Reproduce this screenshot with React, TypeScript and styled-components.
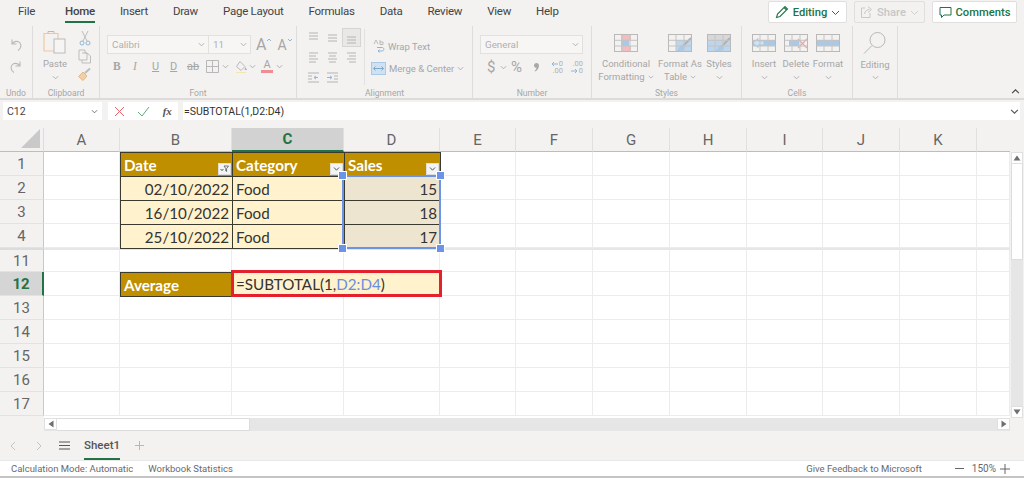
import React from "react";
import styled, { createGlobalStyle } from "styled-components";

const UI = `Roboto, "Open Sans", sans-serif`;
const SHEET = `Lato, "Liberation Sans", sans-serif`;
const FADED = "#a6a6a6";

const Global = createGlobalStyle`
  html, body { margin: 0; padding: 0; background: #f3f2f1; }
  body { font-family: ${UI}; overflow: hidden; }
  * { box-sizing: border-box; }
  svg { display: block; flex: none; }
`;

const Page = styled.div`
  width: 1024px;
  height: 478px;
  background: #f3f2f1;
  display: flex;
  flex-direction: column;
  overflow: hidden;
`;

/* top tabs */
const TabBar = styled.div`
  height: 26px;
  display: flex;
  align-items: flex-start;
  padding: 1px 7px 0 18px;
`;
const TabList = styled.div`
  display: flex;
  gap: 25px;
  flex: 1;
`;
const Tab = styled.div<{ $active?: boolean }>`
  height: 22px;
  padding-top: 2px;
  margin-left: ${(p) => (p.$active ? 5 : 0)}px;
  font-size: 11.5px;
  letter-spacing: -0.25px;
  line-height: 17px;
  color: #444;
  white-space: nowrap;
  font-weight: ${(p) => (p.$active ? 500 : 400)};
  border-bottom: 2px solid ${(p) => (p.$active ? "#217346" : "transparent")};
`;
const TopButtons = styled.div`
  display: flex;
  gap: 7px;
`;
const TopButton = styled.div<{ $w: number; $muted?: boolean }>`
  width: ${(p) => p.$w}px;
  height: 22px;
  display: flex;
  align-items: center;
  justify-content: center;
  gap: 4px;
  font-size: 11.2px;
  font-weight: 500;
  border-radius: 2px;
  border: 1px solid #e1dfdd;
  color: ${(p) => (p.$muted ? "#c6c6c6" : "#217346")};
  background: ${(p) => (p.$muted ? "#f3f2f1" : "#fff")};
`;

/* ribbon */
const Ribbon = styled.div`
  height: 74px;
  display: flex;
  position: relative;
  border-bottom: 2px solid #dcdbda;
`;
const Group = styled.div<{ $w: number; $last?: boolean }>`
  width: ${(p) => p.$w}px;
  height: 72px;
  display: flex;
  flex-direction: column;
  border-right: ${(p) => (p.$last ? "none" : "1px solid #dedddc")};
`;
const GroupBody = styled.div<{ $pad?: string }>`
  height: 62px;
  display: flex;
  align-items: flex-start;
  padding: ${(p) => p.$pad || "0"};
`;
const GroupLabel = styled.div`
  height: 10px;
  font-size: 8.6px;
  line-height: 10px;
  color: ${FADED};
  text-align: center;
`;
const Column = styled.div<{ $gap?: number; $pad?: string; $align?: string; $w?: string }>`
  display: flex;
  flex-direction: column;
  align-items: ${(p) => p.$align || "center"};
  gap: ${(p) => p.$gap || 0}px;
  padding: ${(p) => p.$pad || "0"};
  width: ${(p) => p.$w || "auto"};
`;
const Row = styled.div<{ $gap?: number; $pad?: string }>`
  display: flex;
  align-items: center;
  gap: ${(p) => p.$gap || 0}px;
  padding: ${(p) => p.$pad || "0"};
`;
const Slot = styled.div<{ $w?: number; $ml?: number; $mt?: number }>`
  display: flex;
  ${(p) => (p.$w ? `width: ${p.$w}px;` : "")}
  margin-left: ${(p) => p.$ml || 0}px;
  margin-top: ${(p) => p.$mt || 0}px;
`;
const Faded = styled.div<{
  $size?: number;
  $w?: number;
  $ml?: number;
  $mt?: number;
  $bold?: boolean;
  $deco?: string;
  $serif?: boolean;
  $italic?: boolean;
}>`
  font-size: ${(p) => p.$size || 9.5}px;
  line-height: 13px;
  color: ${FADED};
  white-space: nowrap;
  display: flex;
  align-items: center;
  gap: 3px;
  ${(p) => (p.$w ? `width: ${p.$w}px;` : "")}
  margin-left: ${(p) => p.$ml || 0}px;
  margin-top: ${(p) => p.$mt || 0}px;
  font-weight: ${(p) => (p.$bold ? 700 : 400)};
  font-style: ${(p) => (p.$italic ? "italic" : "normal")};
  text-decoration: ${(p) => p.$deco || "none"};
  ${(p) => (p.$serif ? `font-family: "Liberation Serif", serif;` : "")}
`;
const GrowFont = styled.div<{ $size: number; $ml: number }>`
  display: flex;
  align-items: flex-start;
  font-size: ${(p) => p.$size}px;
  line-height: 16px;
  color: ${FADED};
  margin-left: ${(p) => p.$ml}px;
`;
const ColorFont = styled.div`
  font-size: 11px;
  line-height: 10px;
  color: ${FADED};
`;
const RibbonSelect = styled.div<{ $w: number; $overlap?: boolean }>`
  width: ${(p) => p.$w}px;
  height: 19px;
  margin-left: ${(p) => (p.$overlap ? -1 : 0)}px;
  background: #f7f6f5;
  border: 1px solid #e2e1e0;
  display: flex;
  align-items: center;
  justify-content: space-between;
  padding: 0 3px 0 4px;
  font-size: 9.8px;
  color: #b0b0b0;
`;
const StyleButton = styled.div<{ $w?: number }>`
  width: ${(p) => p.$w || 32}px;
  display: flex;
  flex-direction: column;
  align-items: center;
`;
const AlignCell = styled.div<{ $on?: boolean }>`
  width: 19px;
  height: 19px;
  display: flex;
  align-items: center;
  justify-content: center;
  border: 1px solid ${(p) => (p.$on ? "#d6d5d4" : "transparent")};
  background: ${(p) => (p.$on ? "#e9e8e7" : "transparent")};
`;
const AlignGrid = styled.div`
  display: grid;
  grid-template-columns: 19px 19px 19px;
  grid-template-rows: 19px 21px 19px;
  align-items: center;
  justify-items: center;
  margin: 2px 0 0 7px;
`;
const InnerRule = styled.div`
  width: 1px;
  height: 56px;
  background: #e2e1e0;
  margin: 3px 8px 0 3px;
`;
const Collapse = styled.div`
  position: absolute;
  right: 4px;
  bottom: 2px;
`;
const Decimal = styled.div`
  width: 14px;
  font-size: 7.5px;
  line-height: 7px;
  color: #b0b0b0;
  display: flex;
  flex-direction: column;
  align-items: flex-end;
`;
const DecimalLine = styled.div`
  display: flex;
  align-items: center;
  gap: 1px;
`;

/* formula bar */
const FormulaBar = styled.div`
  height: 28px;
  display: flex;
  padding: 2px 4px 8px 3px;
`;
const NameBox = styled.div`
  width: 99px;
  background: #fff;
  display: flex;
  align-items: center;
  justify-content: space-between;
  padding: 0 4px;
  font-size: 10.5px;
  color: #444;
  margin-right: 6px;
`;
const FxBox = styled.div`
  width: 70px;
  background: #fff;
  display: flex;
  align-items: center;
  justify-content: space-around;
  margin-right: 5px;
`;
const FxLabel = styled.span`
  font-family: "Liberation Serif", serif;
  font-style: italic;
  font-weight: 700;
  font-size: 11px;
  color: #555;
`;
const FormulaInput = styled.div`
  flex: 1;
  background: #fff;
  display: flex;
  align-items: center;
  justify-content: space-between;
  padding: 0 1px 0 1px;
  font-size: 10.5px;
  color: #333;
`;

/* sheet */
const SheetRow = styled.div`
  display: flex;
  height: 290px;
`;
const Grid = styled.div`
  width: 1010px;
  height: 290px;
  display: grid;
  grid-template-columns: 44px 76px 112px 112px 96px 76px 77px 77px 77px 76px 77px 77px 33px;
  grid-template-rows: repeat(12, 24px) 2px;
  position: relative;
  background: #fff;
`;
const Corner = styled.div`
  background: #f3f2f1;
  border-right: 1px solid #dcdcdc;
  border-bottom: 1px solid #bdbdbd;
  position: relative;
`;
const CornerMark = styled.div`
  position: absolute;
  right: 3px;
  bottom: 3px;
  width: 0;
  height: 0;
  border-style: solid;
  border-width: 0 0 19px 19px;
  border-color: transparent transparent #c9c9c9 transparent;
`;
const ColHead = styled.div<{ $on?: boolean; $open?: boolean }>`
  background: ${(p) => (p.$on ? "#d2d2d2" : "#f3f2f1")};
  color: ${(p) => (p.$on ? "#217346" : "#666")};
  font-weight: ${(p) => (p.$on ? 700 : 400)};
  font-size: 15px;
  display: flex;
  align-items: center;
  justify-content: center;
  border-right: ${(p) => (p.$open ? "none" : "1px solid #e0e0e0")};
  border-bottom: ${(p) => (p.$on ? "2px solid #217346" : "1px solid #bdbdbd")};
`;
const RowHead = styled.div<{ $on?: boolean; $thick?: boolean }>`
  background: ${(p) => (p.$on ? "#d5d5d5" : "#f3f2f1")};
  color: ${(p) => (p.$on ? "#217346" : "#666")};
  font-weight: ${(p) => (p.$on ? 700 : 400)};
  font-size: 15px;
  display: flex;
  align-items: center;
  justify-content: center;
  border-right: ${(p) => (p.$on ? "2px solid #217346" : "1px solid #c8c8c8")};
  border-bottom: 1px solid #e2e2e2;
  border-top: ${(p) => (p.$thick ? "2px solid #dcdcdc" : "none")};
`;
const RowFoot = styled.div`
  grid-column: 1;
  background: #f3f2f1;
`;
const Cell = styled.div<{ $thick?: boolean }>`
  border-right: 1px solid #ececec;
  border-bottom: 1px solid #ececec;
  border-top: ${(p) => (p.$thick ? "2px solid #e6e6e6" : "none")};
`;
const TableCell = styled.div<{
  $kind: "head" | "body" | "picked";
  $right?: boolean;
}>`
  position: relative;
  background: ${(p) =>
    p.$kind === "head" ? "#bf8f00" : p.$kind === "picked" ? "#ede5cf" : "#fff2cc"};
  color: ${(p) => (p.$kind === "head" ? "#fff" : "#333")};
  font-family: ${SHEET};
  font-size: 15.2px;
  font-weight: ${(p) => (p.$kind === "head" ? 700 : 400)};
  border: 1px solid #3a3a2e;
  margin: 0 -1px -1px 0;
  padding: 0 3px;
  display: flex;
  align-items: center;
  justify-content: ${(p) => (p.$right ? "flex-end" : "flex-start")};
  white-space: nowrap;
`;
const FilterButton = styled.div`
  position: absolute;
  right: 1px;
  bottom: 1px;
  width: 13px;
  height: 12px;
  background: #f4f4f4;
  border: 1px solid #ddd;
  display: flex;
  align-items: center;
  justify-content: center;
`;
const FormulaCell = styled.div`
  grid-column: 4 / span 2;
  margin: -2px -2px -1px -1px;
  border: 3px solid #e3202b;
  background: #fff2cc;
  position: relative;
  z-index: 3;
  display: flex;
  align-items: center;
  padding: 0 2px;
  font-family: ${SHEET};
  font-size: 15.2px;
  color: #333;
  white-space: nowrap;
`;
const RangeRef = styled.span`
  color: #6b8fe0;
`;
const RangeBox = styled.div`
  position: absolute;
  grid-column: 5 / 6;
  grid-row: 3 / 6;
  inset: -1px -1px -1px -2px;
  border: 2px solid #6d93e6;
  z-index: 2;
  pointer-events: none;
`;
const Handle = styled.div<{ $x: "left" | "right"; $y: "top" | "bottom" }>`
  position: absolute;
  ${(p) => p.$x}: -6px;
  ${(p) => p.$y}: -6px;
  width: 7px;
  height: 7px;
  background: #6d93e6;
  border: 1px solid #fff;
  box-sizing: content-box;
`;

/* vertical scrollbar */
const VScroll = styled.div`
  width: 12px;
  margin: 24px 0 0 1px;
  height: 266px;
  display: flex;
  flex-direction: column;
  background: #e6e6e6;
`;
const ScrollArrow = styled.div<{ $w?: number }>`
  width: ${(p) => p.$w || 12}px;
  height: 12px;
  flex: none;
  background: #fff;
  border: 1px solid #e0e0e0;
  display: flex;
  align-items: center;
  justify-content: center;
`;
const Thumb = styled.div`
  height: 96px;
  background: #fff;
  border: 1px solid #dcdcdc;
  border-top: none;
`;
const Spacer = styled.div`
  flex: 1;
`;

/* horizontal scrollbar */
const HScrollRow = styled.div`
  height: 13px;
  display: flex;
  padding-left: 44px;
`;
const HScroll = styled.div`
  width: 966px;
  height: 13px;
  background: #e6e6e6;
  display: flex;
`;
const HThumb = styled.div`
  width: 193px;
  background: #fff;
  border-top: 1px solid #dcdcdc;
  border-bottom: 1px solid #dcdcdc;
  border-right: 1px solid #dcdcdc;
`;

/* sheet tabs */
const SheetTabs = styled.div`
  height: 29px;
  display: flex;
  align-items: center;
  padding-left: 10px;
`;
const SheetTab = styled.div`
  width: 36px;
  height: 28px;
  margin: 0 15px 0 14px;
  font-size: 11.5px;
  font-weight: 500;
  color: #555;
  display: flex;
  align-items: center;
  justify-content: center;
  border-bottom: 2px solid #217346;
`;
const NavGap = styled.div<{ $w: number }>`
  width: ${(p) => p.$w}px;
`;

/* status bar */
const StatusBar = styled.div`
  height: 18px;
  background: #fff;
  border-top: 1px solid #e8e8e8;
  border-bottom: 2px solid #c4c4c4;
  display: flex;
  align-items: center;
  padding: 0 14px 0 11px;
  font-size: 9.5px;
  color: #6a6a6a;
  white-space: nowrap;
`;
const StatusItem = styled.div<{ $ml?: number }>`
  margin-left: ${(p) => p.$ml || 0}px;
`;
const Zoom = styled.div`
  margin-left: 33px;
  display: flex;
  align-items: center;
  gap: 4px;
  font-size: 10px;
`;
const ZoomValue = styled.span`
  margin-left: 4px;
`;

/* drawings */
const Chevron = ({ size = 7, color = "#a8a8a8", up }: { size?: number; color?: string; up?: boolean }) => (
  <svg width={size} height={size} viewBox="0 0 8 8" fill="none">
    <path d={up ? "M1 5.5 L4 2.5 L7 5.5" : "M1 2.5 L4 5.5 L7 2.5"} stroke={color} strokeWidth="1" />
  </svg>
);

const Lines = ({ rows }: { rows: number[][] }) => (
  <svg width="13" height="13" viewBox="0 0 13 13" stroke="#b4b4b4" strokeWidth="1">
    {rows.map((r, i) => (
      <line key={i} x1={r[0]} x2={r[1]} y1={r[2]} y2={r[2]} />
    ))}
  </svg>
);

const TableGlyph = ({ children }: { children?: React.ReactNode }) => (
  <svg width="24" height="18" viewBox="0 0 24 18" fill="none">
    {children}
    <rect x=".5" y=".5" width="23" height="17" stroke="#b9b9b9" />
    <path d="M.5 6.3H23.5M.5 12H23.5M8 .5V17.5M16 .5V17.5" stroke="#c4c4c4" />
  </svg>
);

const Brush = () => (
  <g>
    <path d="M23 4 L14 13" stroke="#b0b0b0" strokeWidth="2" />
    <path d="M15 11 C11 11 11 16 8 17 C12 18 17 17 16.5 13 Z" fill="#a9c9e6" />
  </g>
);

const DecimalArrow = ({ right }: { right?: boolean }) => (
  <svg width="7" height="6" viewBox="0 0 7 6" fill="none" stroke="#8fb6d8">
    <path d={right ? "M0 3H6M4 1 L6 3 L4 5" : "M7 3H1M3 1 L1 3 L3 5"} />
  </svg>
);

const alignRows: number[][][] = [
  [[2, 11, 2], [2, 11, 5], [2, 11, 8]],
  [[2, 11, 4], [2, 11, 7], [2, 11, 10]],
  [[2, 11, 6], [2, 11, 9], [2, 11, 12]],
  [[2, 11, 2], [2, 9, 5], [2, 11, 8], [2, 9, 11]],
  [[2, 11, 2], [3, 10, 5], [2, 11, 8], [3, 10, 11]],
  [[2, 11, 2], [4, 11, 5], [2, 11, 8], [4, 11, 11]],
];

const tabs = ["File", "Home", "Insert", "Draw", "Page Layout", "Formulas", "Data", "Review", "View", "Help"];
const columns = ["A", "B", "C", "D", "E", "F", "G", "H", "I", "J", "K", ""];
const tableRows = [
  { num: "2", date: "02/10/2022", sales: "15" },
  { num: "3", date: "16/10/2022", sales: "18" },
  { num: "4", date: "25/10/2022", sales: "17" },
];
const blankRows = ["13", "14", "15", "16", "17"];

const Blanks = ({ n, thick }: { n: number; thick?: boolean }) => (
  <>
    {Array.from({ length: n }).map((_, i) => (
      <Cell key={i} $thick={thick} />
    ))}
  </>
);

const Filter = ({ funnel }: { funnel?: boolean }) => (
  <FilterButton>
    <svg width="9" height="8" viewBox="0 0 9 8" fill="none">
      {funnel && <path d="M4 1H8.5L6.6 3.6V6.5L5.8 6V3.6Z" stroke="#555" strokeWidth=".8" />}
      <path d={funnel ? "M.6 4 L2 5.6 L3.4 4" : "M2 2.5 L4.5 5.2 L7 2.5"} stroke="#555" strokeWidth="1" />
    </svg>
  </FilterButton>
);

const Triangle = ({ dir }: { dir: "up" | "down" | "left" | "right" }) => {
  const d = {
    up: "M4 1.5 L7.5 6.5 H.5Z",
    down: "M.5 1.5 H7.5 L4 6.5Z",
    left: "M1.5 4 L6.5 .5 V7.5Z",
    right: "M6.5 4 L1.5 .5 V7.5Z",
  }[dir];
  return (
    <svg width="8" height="8" viewBox="0 0 8 8">
      <path d={d} fill="#6f6f6f" />
    </svg>
  );
};

export default function App() {
  return (
    <Page>
      <Global />
      <TabBar>
        <TabList>
          {tabs.map((t) => (
            <Tab key={t} $active={t === "Home"}>
              {t}
            </Tab>
          ))}
        </TabList>
        <TopButtons>
          <TopButton $w={79}>
            <svg width="14" height="14" viewBox="0 0 14 14" fill="none" stroke="#217346" strokeWidth="1.1">
              <path d="M1.5 12.5 L2.5 9 L10 1.5 L12.5 4 L5 11.5 Z M9 2.5 L11.5 5" />
            </svg>
            Editing
            <svg width="9" height="9" viewBox="0 0 9 9" fill="none" stroke="#217346">
              <path d="M1 3 L4.5 6.5 L8 3" />
            </svg>
          </TopButton>
          <TopButton $w={71} $muted>
            <svg width="13" height="14" viewBox="0 0 13 14" fill="none" stroke="#c8c8c8">
              <path d="M5 3H1.5V12.5H10V8M4.5 9C5 6 7 4.5 9.5 4.5M8 1.5 L11.5 4.5 L8 7.5" />
            </svg>
            Share
            <svg width="9" height="9" viewBox="0 0 9 9" fill="none" stroke="#d0d0d0">
              <path d="M1 3 L4.5 6.5 L8 3" />
            </svg>
          </TopButton>
          <TopButton $w={85}>
            <svg width="13" height="13" viewBox="0 0 13 13" fill="none" stroke="#217346">
              <path d="M1 1.5H12V9H5L2.5 11.5V9H1Z" />
            </svg>
            Comments
          </TopButton>
        </TopButtons>
      </TabBar>

      <Ribbon>
        <Group $w={33}>
          <GroupBody>
            <Column $gap={8} $pad="12px 0 0 0" $w="100%">
              <svg width="14" height="14" viewBox="0 0 14 14" fill="none" stroke="#b8b8b8" strokeWidth="1.1">
                <path d="M3 1.5V6H7.5M3.2 5.8C5 3 9 2.5 11 5C13 7.5 11.5 11 9 12.5" />
              </svg>
              <svg width="14" height="14" viewBox="0 0 14 14" fill="none" stroke="#b8b8b8" strokeWidth="1.1">
                <path d="M11 1.5V6H6.5M10.8 5.8C9 3 5 2.5 3 5C1 7.5 2.5 11 5 12.5" />
              </svg>
            </Column>
          </GroupBody>
          <GroupLabel>Undo</GroupLabel>
        </Group>

        <Group $w={67}>
          <GroupBody>
            <Column $pad="4px 0 0 0" $w="44px">
              <svg width="24" height="25" viewBox="0 0 24 25" fill="none">
                <path d="M1 3.5H15V21H1Z" stroke="#edc9a2" strokeWidth="1.2" />
                <path d="M5 3.5V1.5H11V3.5" stroke="#d8b48e" />
                <rect x="11" y="9" width="11" height="14" fill="#f6f5f4" stroke="#bababa" />
              </svg>
              <Faded $mt={2}>Paste</Faded>
              <Slot $mt={4}>
                <Chevron />
              </Slot>
            </Column>
            <Column $gap={3} $pad="4px 0 0 0">
              <svg width="14" height="16" viewBox="0 0 14 16" fill="none" stroke="#bdbdbd">
                <path d="M4 1 L9 11 M10 1 L5 11" />
                <circle cx="4" cy="13" r="2" stroke="#8fb6d8" />
                <circle cx="10" cy="13" r="2" stroke="#8fb6d8" />
              </svg>
              <svg width="14" height="15" viewBox="0 0 14 15" fill="none" stroke="#bdbdbd">
                <path d="M1 1H7V4H9V11H1ZM4 4H9L12.5 7V14H4V11" />
              </svg>
              <svg width="15" height="15" viewBox="0 0 15 15" fill="none">
                <path d="M8 6 L13 1.5" stroke="#bcbcbc" strokeWidth="2" />
                <path d="M6 5 L10 9 L6 13.5 L1.5 9.5Z" fill="#f1d0a8" stroke="#e2b98a" />
              </svg>
            </Column>
          </GroupBody>
          <GroupLabel>Clipboard</GroupLabel>
        </Group>

        <Group $w={197}>
          <GroupBody>
            <Column $align="flex-start" $gap={6} $pad="9px 0 0 7px">
              <Row>
                <RibbonSelect $w={102}>
                  Calibri <Chevron />
                </RibbonSelect>
                <RibbonSelect $w={43} $overlap>
                  11 <Chevron />
                </RibbonSelect>
                <GrowFont $size={16} $ml={5}>
                  A
                  <svg width="6" height="6" viewBox="0 0 6 6" fill="none" stroke="#8fb6d8">
                    <path d="M1 4 L3 2 L5 4" />
                  </svg>
                </GrowFont>
                <GrowFont $size={14} $ml={5}>
                  A
                  <svg width="6" height="6" viewBox="0 0 6 6" fill="none" stroke="#8fb6d8">
                    <path d="M1 2 L3 4 L5 2" />
                  </svg>
                </GrowFont>
              </Row>
              <Row $pad="0 0 0 6px">
                <Faded $size={11.5} $w={20} $bold $serif>B</Faded>
                <Faded $size={11.5} $w={19} $italic $serif>I</Faded>
                <Faded $size={11} $w={18} $deco="underline">U</Faded>
                <Faded $size={11} $w={17} $deco="underline">D</Faded>
                <Faded $size={11} $w={19} $deco="line-through">ab</Faded>
                <svg width="13" height="13" viewBox="0 0 13 13" fill="none" stroke="#b8b8b8">
                  <path d="M.5 .5H12.5V12.5H.5ZM6.5 .5V12.5M.5 6.5H12.5" />
                </svg>
                <Slot $ml={3}><Chevron /></Slot>
                <Slot $ml={6}>
                  <svg width="13" height="13" viewBox="0 0 13 13" fill="none">
                    <path d="M5 1.5 L10 6.5 L6 10.5 L1.5 6.5Z" stroke="#b8b8b8" />
                    <path d="M10.5 7 L12 10 H9.5Z" fill="#8fb6d8" />
                    <path d="M1 12.5H11" stroke="#f3e6b0" />
                  </svg>
                </Slot>
                <Slot $ml={1}><Chevron /></Slot>
                <Slot $ml={5}>
                  <Column>
                    <ColorFont>A</ColorFont>
                    <svg width="12" height="3" viewBox="0 0 12 3">
                      <rect width="12" height="3" fill="#ee8e94" />
                    </svg>
                  </Column>
                </Slot>
                <Slot $ml={3}><Chevron /></Slot>
              </Row>
            </Column>
          </GroupBody>
          <GroupLabel>Font</GroupLabel>
        </Group>

        <Group $w={176}>
          <GroupBody>
            <AlignGrid>
              {alignRows.map((r, i) => (
                <AlignCell key={i} $on={i === 2}>
                  <Lines rows={r} />
                </AlignCell>
              ))}
              <AlignCell>
                <svg width="13" height="13" viewBox="0 0 13 13" fill="none" stroke="#b4b4b4">
                  <path d="M1 2H12M1 5H5M1 8H5M1 11H12" />
                  <path d="M7 6.5H11M9 4.8 L7 6.5 L9 8.2" stroke="#8fb6d8" />
                </svg>
              </AlignCell>
              <AlignCell>
                <svg width="13" height="13" viewBox="0 0 13 13" fill="none" stroke="#b4b4b4">
                  <path d="M1 2H12M8 5H12M8 8H12M1 11H12" />
                  <path d="M1 6.5H5.5M4 4.8 L6 6.5 L4 8.2" stroke="#8fb6d8" />
                </svg>
              </AlignCell>
            </AlignGrid>
            <InnerRule />
            <Column $align="flex-start" $gap={9} $pad="13px 0 0 0">
              <Faded>
                <svg width="12" height="14" viewBox="0 0 12 14" fill="none">
                  <path d="M1 5 L3 1 L5 5M7 1V5.5H10V3H7" stroke="#b4b4b4" strokeWidth=".9" />
                  <path d="M4 8.5H9C11.5 8.5 11.5 12 9 12H5M6.5 10.5 L5 12 L6.5 13.5" stroke="#8fb6d8" />
                </svg>
                Wrap Text
              </Faded>
              <Faded $ml={-2}>
                <svg width="15" height="13" viewBox="0 0 15 13" fill="none">
                  <rect x=".5" y=".5" width="14" height="12" fill="#cfe2f3" stroke="#a9c9e6" />
                  <path d="M2.5 6.5H12.5M4.5 4.5 L2.5 6.5 L4.5 8.5M10.5 4.5 L12.5 6.5 L10.5 8.5" stroke="#7fa8cf" />
                </svg>
                Merge &amp; Center <Chevron />
              </Faded>
            </Column>
          </GroupBody>
          <GroupLabel>Alignment</GroupLabel>
        </Group>

        <Group $w={119}>
          <GroupBody>
            <Column $align="flex-start" $gap={6} $pad="9px 0 0 7px">
              <RibbonSelect $w={103}>
                General <Chevron />
              </RibbonSelect>
              <Row $pad="0 0 0 7px">
                <Faded $size={15} $w={8}>$</Faded>
                <Slot $ml={5}><Chevron /></Slot>
                <Faded $size={15} $w={13} $ml={4}>%</Faded>
                <Slot $ml={10}>
                  <svg width="5" height="10" viewBox="0 0 5 10">
                    <path d="M2.5 1 C4 1 5 2 5 3.4 C5 6 3.5 8 1 9.5 L.5 9 C1.6 8 2.4 7 2.6 5.8 C1.2 5.8 0 4.8 0 3.4 C0 2 1 1 2.5 1Z" fill="#a8a8a8" />
                  </svg>
                </Slot>
                <Slot $ml={10}>
                  <Decimal>
                    <DecimalLine><DecimalArrow />0</DecimalLine>
                    <DecimalLine>.00</DecimalLine>
                  </Decimal>
                </Slot>
                <Slot $ml={6}>
                  <Decimal>
                    <DecimalLine>.00</DecimalLine>
                    <DecimalLine><DecimalArrow right />0</DecimalLine>
                  </Decimal>
                </Slot>
              </Row>
            </Column>
          </GroupBody>
          <GroupLabel>Number</GroupLabel>
        </Group>

        <Group $w={150}>
          <GroupBody $pad="8px 0 0 0">
            <StyleButton $w={68}>
              <TableGlyph>
                <rect x="7" y="1" width="10" height="5" fill="#f3bcc0" />
                <rect x="7" y="6" width="8" height="6" fill="#a9c9e6" />
                <rect x="7" y="12" width="10" height="5" fill="#f3bcc0" />
              </TableGlyph>
              <Faded $mt={5}>Conditional</Faded>
              <Faded>
                Formatting <Chevron size={6} />
              </Faded>
            </StyleButton>
            <StyleButton $w={40}>
              <TableGlyph>
                <rect x="8" y="6" width="15" height="11" fill="#bcd6ee" />
                <Brush />
              </TableGlyph>
              <Faded $mt={5}>Format As</Faded>
              <Faded>
                Table <Chevron size={6} />
              </Faded>
            </StyleButton>
            <StyleButton $w={38}>
              <TableGlyph>
                <rect x="1" y="1" width="22" height="5" fill="#d8d8d8" />
                <rect x="1" y="6" width="22" height="11" fill="#bcd6ee" />
                <Brush />
              </TableGlyph>
              <Faded $mt={5}>Styles</Faded>
              <Slot $mt={4}><Chevron /></Slot>
            </StyleButton>
          </GroupBody>
          <GroupLabel>Styles</GroupLabel>
        </Group>

        <Group $w={111}>
          <GroupBody $pad="8px 0 0 6px">
            <StyleButton>
              <TableGlyph>
                <rect x="1" y="6" width="22" height="6" fill="#a9c9e6" />
                <path d="M1 9 L6 4.5V7H12V11H6V13.5Z" fill="#cfe2f3" stroke="#a9c9e6" />
              </TableGlyph>
              <Faded $mt={5}>Insert</Faded>
              <Slot $mt={4}><Chevron /></Slot>
            </StyleButton>
            <StyleButton>
              <TableGlyph>
                <rect x="5" y="6" width="10" height="6" fill="#a9c9e6" />
                <path d="M14 5 L23 14 M23 5 L14 14" stroke="#f0a4a8" strokeWidth="1.2" />
              </TableGlyph>
              <Faded $mt={5}>Delete</Faded>
              <Slot $mt={4}><Chevron /></Slot>
            </StyleButton>
            <StyleButton>
              <TableGlyph>
                <rect x="1" y="6" width="22" height="6" fill="#a9c9e6" />
              </TableGlyph>
              <Faded $mt={5}>Format</Faded>
              <Slot $mt={4}><Chevron /></Slot>
            </StyleButton>
          </GroupBody>
          <GroupLabel>Cells</GroupLabel>
        </Group>

        <Group $w={45}>
          <GroupBody>
            <Column $pad="5px 0 0 0" $w="100%">
              <svg width="24" height="24" viewBox="0 0 24 24" fill="none" stroke="#b8b8b8">
                <circle cx="14.5" cy="9" r="7.5" />
                <path d="M9 14.5 L1 22.5" />
              </svg>
              <Faded $mt={3}>Editing</Faded>
              <Slot $mt={3}><Chevron /></Slot>
            </Column>
          </GroupBody>
        </Group>

        <Collapse>
          <Chevron size={9} color="#444" up />
        </Collapse>
      </Ribbon>

      <FormulaBar>
        <NameBox>
          C12
          <Chevron color="#666" />
        </NameBox>
        <FxBox>
          <svg width="11" height="11" viewBox="0 0 11 11" stroke="#e9666c" strokeWidth="1">
            <path d="M1 1 L10 10 M10 1 L1 10" />
          </svg>
          <svg width="13" height="11" viewBox="0 0 13 11" fill="none" stroke="#62ab7e" strokeWidth="1">
            <path d="M1 6 L5 10 L12 1" />
          </svg>
          <FxLabel>fx</FxLabel>
        </FxBox>
        <FormulaInput>
          =SUBTOTAL(1,D2:D4)
          <Chevron size={9} color="#555" />
        </FormulaInput>
      </FormulaBar>

      <SheetRow>
        <Grid>
          <Corner>
            <CornerMark />
          </Corner>
          {columns.map((c, i) => (
            <ColHead key={i} $on={c === "C"} $open={c === ""}>
              {c}
            </ColHead>
          ))}

          <RowHead>1</RowHead>
          <Cell />
          <TableCell $kind="head">
            Date
            <Filter funnel />
          </TableCell>
          <TableCell $kind="head">
            Category
            <Filter />
          </TableCell>
          <TableCell $kind="head">
            Sales
            <Filter />
          </TableCell>
          <Blanks n={8} />

          {tableRows.map((r) => (
            <React.Fragment key={r.num}>
              <RowHead>{r.num}</RowHead>
              <Cell />
              <TableCell $kind="body" $right>
                {r.date}
              </TableCell>
              <TableCell $kind="body">Food</TableCell>
              <TableCell $kind="picked" $right>
                {r.sales}
              </TableCell>
              <Blanks n={8} />
            </React.Fragment>
          ))}

          <RangeBox>
            <Handle $x="left" $y="top" />
            <Handle $x="right" $y="top" />
            <Handle $x="left" $y="bottom" />
            <Handle $x="right" $y="bottom" />
          </RangeBox>

          <RowHead $thick>11</RowHead>
          <Blanks n={12} thick />

          <RowHead $on>12</RowHead>
          <Cell />
          <TableCell $kind="head">Average</TableCell>
          <FormulaCell>
            =SUBTOTAL(1,<RangeRef>D2:D4</RangeRef>)
          </FormulaCell>
          <Blanks n={8} />

          {blankRows.map((n) => (
            <React.Fragment key={n}>
              <RowHead>{n}</RowHead>
              <Blanks n={12} />
            </React.Fragment>
          ))}
          <RowFoot />
        </Grid>
        <VScroll>
          <ScrollArrow>
            <Triangle dir="up" />
          </ScrollArrow>
          <Thumb />
          <Spacer />
          <ScrollArrow>
            <Triangle dir="down" />
          </ScrollArrow>
        </VScroll>
      </SheetRow>

      <HScrollRow>
        <HScroll>
          <ScrollArrow $w={13}>
            <Triangle dir="left" />
          </ScrollArrow>
          <HThumb />
          <Spacer />
          <ScrollArrow $w={13}>
            <Triangle dir="right" />
          </ScrollArrow>
        </HScroll>
      </HScrollRow>

      <SheetTabs>
        <svg width="6" height="10" viewBox="0 0 6 10" fill="none" stroke="#c4c4c4">
          <path d="M5 1 L1 5 L5 9" />
        </svg>
        <NavGap $w={20} />
        <svg width="6" height="10" viewBox="0 0 6 10" fill="none" stroke="#c4c4c4">
          <path d="M1 1 L5 5 L1 9" />
        </svg>
        <NavGap $w={17} />
        <svg width="11" height="9" viewBox="0 0 11 9" fill="none" stroke="#555">
          <path d="M0 1H11M0 4.5H11M0 8H11" />
        </svg>
        <SheetTab>Sheet1</SheetTab>
        <svg width="9" height="9" viewBox="0 0 9 9" fill="none" stroke="#b8b8b8">
          <path d="M4.5 0V9M0 4.5H9" />
        </svg>
      </SheetTabs>

      <StatusBar>
        <StatusItem>Calculation Mode: Automatic</StatusItem>
        <StatusItem $ml={15}>Workbook Statistics</StatusItem>
        <Spacer />
        <StatusItem>Give Feedback to Microsoft</StatusItem>
        <Zoom>
          <svg width="9" height="9" viewBox="0 0 9 9" stroke="#666">
            <path d="M0 4.5H9" />
          </svg>
          <ZoomValue>150%</ZoomValue>
          <svg width="10" height="10" viewBox="0 0 10 10" stroke="#666">
            <path d="M5 0V10M0 5H10" />
          </svg>
        </Zoom>
      </StatusBar>
    </Page>
  );
}
